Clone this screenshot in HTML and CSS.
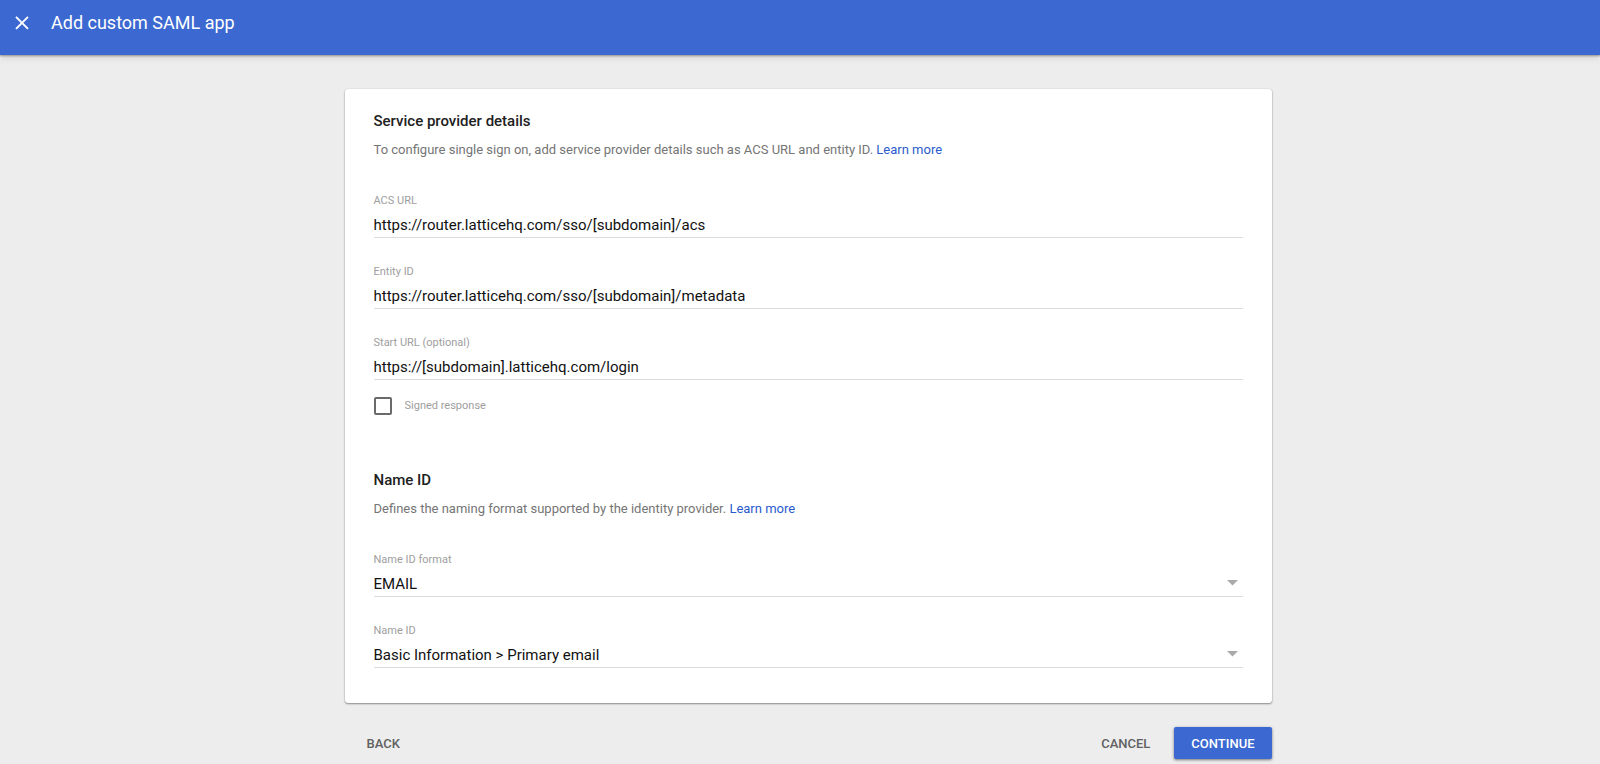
FILE: index.html
```html
<!DOCTYPE html>
<html lang="en">
<head>
<meta charset="utf-8">
<title>Add custom SAML app</title>
<link rel="stylesheet" href="styles.css">
</head>
<body>
<header class="topbar">
  <button class="close" type="button" aria-label="Close">
    <svg width="14" height="14" viewBox="0 0 14 14" aria-hidden="true"><path d="M1 .8 13 12.800M13 .8 1 12.800" fill="none" stroke="currentColor" stroke-width="1.9"/></svg>
  </button>
  <h1 class="title">Add custom SAML app</h1>
</header>
<main class="page">
  <form class="wizard">
    <div class="card">
      <section class="section">
        <h2 class="heading">Service provider details</h2>
        <p class="description">To configure single sign on, add service provider details such as ACS URL and entity ID. <a class="link" href="#">Learn more</a></p>
        <div class="fields">
          <div class="field">
            <label class="label" for="acs">ACS URL</label>
            <input class="control" id="acs" type="text" value="https://router.latticehq.com/sso/[subdomain]/acs">
          </div>
          <div class="field">
            <label class="label" for="entity">Entity ID</label>
            <input class="control" id="entity" type="text" value="https://router.latticehq.com/sso/[subdomain]/metadata">
          </div>
          <div class="field">
            <label class="label" for="start">Start URL (optional)</label>
            <input class="control" id="start" type="text" value="https://[subdomain].latticehq.com/login">
          </div>
        </div>
        <div class="check">
          <input class="checkbox" id="signed" type="checkbox">
          <label class="label" for="signed">Signed response</label>
        </div>
      </section>
      <section class="section">
        <h2 class="heading">Name ID</h2>
        <p class="description">Defines the naming format supported by the identity provider. <a class="link" href="#">Learn more</a></p>
        <div class="fields">
          <div class="field">
            <label class="label" for="format">Name ID format</label>
            <div class="picker">
              <select class="control" id="format"><option>EMAIL</option></select>
              <svg class="arrow" width="11" height="6" viewBox="0 0 11 6" aria-hidden="true"><path d="M0 0h11L5.500 5.500z" fill="currentColor"/></svg>
            </div>
          </div>
          <div class="field">
            <label class="label" for="nameid">Name ID</label>
            <div class="picker">
              <select class="control" id="nameid"><option>Basic Information &gt; Primary email</option></select>
              <svg class="arrow" width="11" height="6" viewBox="0 0 11 6" aria-hidden="true"><path d="M0 0h11L5.500 5.500z" fill="currentColor"/></svg>
            </div>
          </div>
        </div>
      </section>
    </div>
    <div class="actions">
      <button class="button back" type="button">BACK</button>
      <button class="button" type="button">CANCEL</button>
      <button class="button primary" type="submit">CONTINUE</button>
    </div>
  </form>
</main>
</body>
</html>
```
FILE: styles.css
```css
* {
  box-sizing: border-box;
}

body {
  margin: 0;
  background: #ededed;
  color: #212121;
  font-family: Roboto, "Liberation Sans", sans-serif;
}

h1, h2, p {
  margin: 0;
}

button, input, select {
  font-family: inherit;
}

.topbar {
  display: flex;
  align-items: flex-start;
  gap: 14px;
  padding: 8px 8px 17px 7px;
  background: #3c69d1;
  color: #fff;
  box-shadow: 0 1px 2px rgba(0, 0, 0, 0.35), 0 2px 8px rgba(0, 0, 0, 0.12);
}

.close {
  display: flex;
  padding: 8px;
  border: 0;
  background: none;
  color: inherit;
}

.title {
  font-size: 18px;
  font-weight: 400;
  line-height: 30px;
}

.page {
  padding: 34px 16px 4px 32px;
}

.wizard {
  max-width: 927px;
  margin: 0 auto;
}

.card {
  display: flex;
  flex-direction: column;
  gap: 55px;
  padding: 22px 29px 35px;
  border-radius: 3px;
  background: #fff;
  box-shadow: 0 1px 2px rgba(0, 0, 0, 0.42), 0 0 1px rgba(0, 0, 0, 0.2);
}

.heading {
  font-size: 15px;
  font-weight: 500;
  line-height: 20px;
}

.description {
  margin-top: 9px;
  color: #757575;
  font-size: 13px;
  line-height: 20px;
}

.link {
  color: #2a5bcd;
  text-decoration: none;
}

.fields {
  display: flex;
  flex-direction: column;
  gap: 26px;
  margin-top: 33px;
}

.field {
  display: flex;
  flex-direction: column;
}

.label {
  color: #9e9e9e;
  font-size: 11px;
  line-height: 16px;
}

.control {
  width: 100%;
  height: 29px;
  padding: 4px 0 0;
  border: 0;
  border-bottom: 1px solid #dcdcdc;
  border-radius: 0;
  outline: 0;
  background: none;
  color: #111;
  font-size: 15px;
  appearance: none;
}

.picker {
  position: relative;
}

.arrow {
  position: absolute;
  top: 12px;
  right: 5px;
  color: #aaa;
  pointer-events: none;
}

.check {
  display: flex;
  align-items: center;
  gap: 13px;
  margin-top: 17px;
}

.checkbox {
  width: 18px;
  height: 18px;
  margin: 0;
  border: 2px solid #6a6a6a;
  border-radius: 2px;
  background: #fff;
  appearance: none;
}

.checkbox:checked {
  background: #3c69d1;
}

.actions {
  display: flex;
  align-items: center;
  gap: 7px;
  margin-top: 24px;
}

.button {
  height: 32px;
  padding: 0 17px;
  border: 0;
  border-radius: 2px;
  background: none;
  color: #616161;
  font-size: 13px;
  font-weight: 500;
}

.back {
  margin-left: 5px;
  margin-right: auto;
}

.primary {
  background: #3c69d1;
  color: #fff;
  box-shadow: 0 1px 3px rgba(0, 0, 0, 0.5);
}
```
